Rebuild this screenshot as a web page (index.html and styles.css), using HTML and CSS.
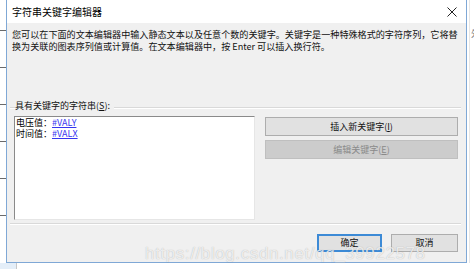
FILE: index.html
```html
<!DOCTYPE html>
<html>
  <head>
    <meta charset="utf-8">
    <title>字符串关键字编辑器</title>
    <link rel="stylesheet" href="styles.css">
  </head>
  <body>
  <div class="screen">
    <div class="side side__left">
      <div class="row"></div>
      <div class="row"></div>
      <div class="row"></div>
      <div class="row"></div>
      <div class="row"></div>
      <div class="row"></div>
    </div>
    <div class="dialog">
      <header class="titlebar">
        <span class="title">字符串关键字编辑器</span>
        <svg class="close" width="10" height="10" viewBox="0 0 10 10">
          <path d="M0.5 0.5 L9.5 9.5 M9.5 0.5 L0.5 9.5" stroke="#222" stroke-width="1" fill="none"/>
        </svg>
      </header>
      <main class="body">
        <p class="desc">您可以在下面的文本编辑器中输入静态文本以及任意个数的关键字。关键字是一种特殊格式的字符序列，它将替<br>换为关联的图表序列值或计算值。在文本编辑器中，按 Enter 可以插入换行符。</p>
        <section class="group">
          <div class="group__head"><span class="group__label">具有关键字的字符串(<u>S</u>):</span></div>
          <div class="group__content">
            <div class="editor">
              <div>电压值：<a href="#">#VALY</a></div>
              <div>时间值：<a href="#">#VALX</a></div>
            </div>
            <div class="actions">
              <button class="btn">插入新关键字(<u>I</u>)</button>
              <button class="btn btn--disabled" disabled>编辑关键字(<u>E</u>)</button>
            </div>
          </div>
        </section>
        <footer class="footer">
          <button class="btn btn--default btn--ok">确定</button>
          <button class="btn btn--cancel">取消</button>
        </footer>
      </main>
    </div>
    <div class="side side__right"><span class="frag">外</span></div>
  </div>
  <div class="below">
    <div class="below__blue"></div>
  </div>
  <div class="watermark">https://blog.csdn.net/qq_39922578</div>
  </body>
</html>
```

FILE: styles.css
```css
* {
  box-sizing: border-box;
  margin: 0;
}

body {
  width: 474px;
  height: 269px;
  overflow: hidden;
  background: #fff;
  position: relative;
  font-family: "Noto Sans CJK SC", "Liberation Sans", sans-serif;
  color: #000;
}

.screen {
  display: flex;
  height: 263px;
}

.side__left {
  width: 6px;
  padding-top: 0;
  display: flex;
  flex-direction: column;
}

.side__left .row {
  height: 37px;
  border-bottom: 1px solid #6a6a6a;
  flex-shrink: 0;
}

.side__left .row:first-child {
  height: 31px;
}

.side__right {
  flex: 1;
  border-left: 1px solid #e6e6e6;
  margin-left: 2px;
  overflow: hidden;
  font-size: 9px;
  color: #777;
  padding-top: 27px;
}

.frag {
  display: block;
  margin-left: 1px;
}

.dialog {
  width: 461px;
  height: 263px;
  border: 1px solid #7fa8d6;
  border-top: none;
  display: flex;
  flex-direction: column;
  background: #f0f0f0;
}

.titlebar {
  height: 23px;
  background: #fff;
  display: flex;
  align-items: center;
  padding: 0 9px 0 5px;
  flex-shrink: 0;
}

.title {
  flex: 1;
  font-size: 10px;
  line-height: 12px;
}

.body {
  flex: 1;
  display: flex;
  flex-direction: column;
}

.desc {
  margin: 5px 0 0 5px;
  font-size: 9.1px;
  line-height: 12px;
  white-space: nowrap;
  color: #111;
}

.group {
  margin: 48px 5px 0 3px;
  padding-bottom: 3px;
  border-bottom: 1px solid #d9d9d9;
  box-shadow: 0 1px 0 #fff;
}

.group__head {
  height: 12px;
  display: flex;
  align-items: center;
}

.group__head::before,
.group__head::after {
  content: "";
  border-top: 1px solid #d9d9d9;
  box-shadow: 0 1px 0 #fff;
  margin-top: 2px;
}

.group__head::before {
  width: 5px;
}

.group__head::after {
  flex: 1;
  margin-left: 4px;
}

.group__label {
  font-size: 9px;
  line-height: 12px;
  color: #111;
}

.group__content {
  display: flex;
  gap: 10px;
  margin-top: 4px;
  padding: 0 3px 0 4px;
}

.editor {
  width: 241px;
  height: 104px;
  background: #fff;
  border-top: 1px solid #8a8a8a;
  border-left: 1px solid #8a8a8a;
  border-right: 1px solid #e6e6e6;
  border-bottom: 1px solid #e6e6e6;
  padding: 0 0 0 1px;
  font-size: 9px;
  line-height: 11px;
}

.editor a {
  color: #3535f0;
}

.actions {
  width: 193px;
  margin-top: 1px;
  display: flex;
  flex-direction: column;
  gap: 4px;
}

.btn {
  height: 19px;
  background: #e1e1e1;
  border: 1px solid #adadad;
  font-family: "Noto Sans CJK SC", sans-serif;
  font-size: 9px;
  line-height: 12px;
  color: #111;
  padding: 0;
}

.btn--disabled {
  background: #cccccc;
  border-color: #bfbfbf;
  color: #8a8a8a;
}

.footer {
  margin-top: 10px;
  display: flex;
  justify-content: flex-end;
  gap: 9px;
  padding-right: 8px;
}

.footer .btn {
  height: 18px;
}

.btn--ok {
  width: 65px;
}

.btn--default {
  border: 2px solid #3c8ad6;
}

.btn--cancel {
  width: 67px;
}

.below {
  height: 6px;
  display: flex;
}

.below__blue {
  width: 17px;
  border-right: 1px solid #c8c8c8;
  background: #e4eef8;
}

.watermark {
  position: absolute;
  left: 145px;
  top: 244px;
  font-family: "Liberation Sans", sans-serif;
  font-size: 17px;
  letter-spacing: 0.6px;
  color: rgba(255, 255, 255, 0.75);
  text-shadow: 0 0 1px rgba(90, 90, 90, 0.45);
  white-space: nowrap;
}
```
